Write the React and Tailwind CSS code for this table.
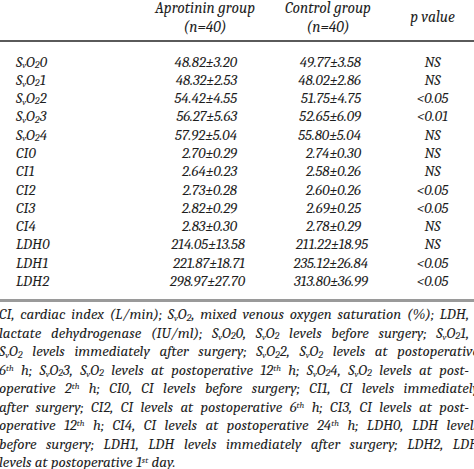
import React from "react";

const Svo = () => (
  <>
    S<span className="relative top-[0.2em] text-[0.6em] leading-[0]">v</span>O
    <span className="relative top-[0.12em] text-[0.7em] leading-[0]">2</span>
  </>
);

const Sup = ({ children }) => (
  <span className="relative top-[-0.45em] text-[0.6em] leading-[0]">{children}</span>
);

const rows = [
  { svo: true, label: "0", a: "48.82±3.20", c: "49.77±3.58", p: "NS" },
  { svo: true, label: "1", a: "48.32±2.53", c: "48.02±2.86", p: "NS" },
  { svo: true, label: "2", a: "54.42±4.55", c: "51.75±4.75", p: "<0.05" },
  { svo: true, label: "3", a: "56.27±5.63", c: "52.65±6.09", p: "<0.01" },
  { svo: true, label: "4", a: "57.92±5.04", c: "55.80±5.04", p: "NS" },
  { label: "CI0", a: "2.70±0.29", c: "2.74±0.30", p: "NS" },
  { label: "CI1", a: "2.64±0.23", c: "2.58±0.26", p: "NS" },
  { label: "CI2", a: "2.73±0.28", c: "2.60±0.26", p: "<0.05" },
  { label: "CI3", a: "2.82±0.29", c: "2.69±0.25", p: "<0.05" },
  { label: "CI4", a: "2.83±0.30", c: "2.78±0.29", p: "NS" },
  { wide: true, label: "LDH0", a: "214.05±13.58", c: "211.22±18.95", p: "NS" },
  { wide: true, label: "LDH1", a: "221.87±18.71", c: "235.12±26.84", p: "<0.05" },
  { wide: true, label: "LDH2", a: "298.97±27.70", c: "313.80±36.99", p: "<0.05" },
];

const App = () => {
  return (
    <div className="w-[474px] h-[469px] overflow-hidden bg-white text-[#1e1e1e] italic font-serif">
      {/* header */}
      <div className="mt-[-1px] h-[41px] grid grid-cols-[145px_120px_120px_89px] text-[15.5px] leading-[19px]">
        <div />
        <div className="text-center">
          <div>Aprotinin group</div>
          <div>(n=40)</div>
        </div>
        <div className="text-center pl-[6px]">
          <div>Control group</div>
          <div>(n=40)</div>
        </div>
        <div className="flex items-center justify-center pl-[6px] pb-[4px]">p value</div>
      </div>
      <div className="h-[1.5px] bg-[#5a5a5a]" />

      {/* body */}
      <div className="pt-[11px] pb-[9px] text-[15px] leading-[18.3px]">
        {rows.map((r, i) => (
          <div key={i} className="grid grid-cols-[145px_120px_120px_89px]">
            <div className="pl-[16px]">
              {r.svo ? (
                <>
                  <Svo />
                  {r.label}
                </>
              ) : (
                r.label
              )}
            </div>
            <div className={r.wide ? "text-right pr-[20px]" : "text-right pr-[28px]"}>{r.a}</div>
            <div className={r.wide ? "text-right pr-[17px]" : "text-right pr-[24px]"}>{r.c}</div>
            <div className="text-center pl-[6px]">{r.p}</div>
          </div>
        ))}
      </div>
      <div className="h-[3px] bg-[#9a9a9a]" />

      {/* footnote */}
      <div className="pt-[3px] ml-[-1px] text-[15px] leading-[18.5px] text-justify [text-align-last:justify] whitespace-nowrap">
        <div className="w-[470px]">
          CI, cardiac index (L/min); <Svo />, mixed venous oxygen saturation (%); LDH,
        </div>
        <div className="w-[470px]">
          lactate dehydrogenase (IU/ml); <Svo />0, <Svo /> levels before surgery; <Svo />1,
        </div>
        <div className="w-[480px]">
          <Svo /> levels immediately after surgery; <Svo />2, <Svo /> levels at postoperative
        </div>
        <div className="w-[470px]">
          6<Sup>th</Sup> h; <Svo />3, <Svo /> levels at postoperative 12<Sup>th</Sup> h; <Svo />4, <Svo /> levels at post-
        </div>
        <div className="w-[480px]">
          operative 2<Sup>th</Sup> h; CI0, CI levels before surgery; CI1, CI levels immediately
        </div>
        <div className="w-[470px]">
          after surgery; CI2, CI levels at postoperative 6<Sup>th</Sup> h; CI3, CI levels at post-
        </div>
        <div className="w-[480px]">
          operative 12<Sup>th</Sup> h; CI4, CI levels at postoperative 24<Sup>th</Sup> h; LDH0, LDH levels
        </div>
        <div className="w-[480px]">
          before surgery; LDH1, LDH levels immediately after surgery; LDH2, LDH
        </div>
        <div className="[text-align-last:left]">
          levels at postoperative 1<Sup>st</Sup> day.
        </div>
      </div>
    </div>
  );
};

export default App;
